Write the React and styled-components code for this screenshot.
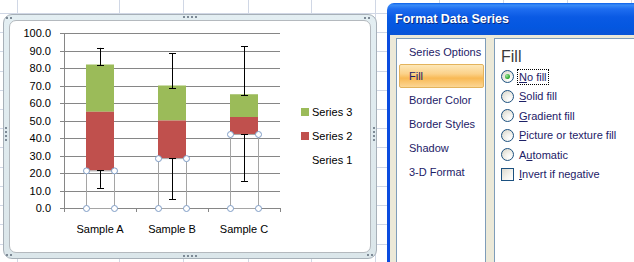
import React from "react";
import styled, { createGlobalStyle } from "styled-components";

const Global = createGlobalStyle`
  html, body { margin: 0; padding: 0; overflow: hidden; background: #fff; }
  * { box-sizing: border-box; }
`;

const rowLines = [13, 32, 51, 71, 90, 109, 128, 147, 167, 186, 205, 224, 244];
const colLines = [17, 119, 183, 248, 311, 375, 439, 503, 567, 631];
const gridBg = [
  ...rowLines.map(
    (y) => `linear-gradient(#d0d7e5, #d0d7e5) 0 ${y}px / 100% 1px no-repeat`
  ),
  ...colLines.map(
    (x) => `linear-gradient(#d0d7e5, #d0d7e5) ${x}px 0 / 1px 100% no-repeat`
  ),
].join(", ");

const Sheet = styled.div`
  position: relative;
  width: 634px;
  height: 262px;
  overflow: hidden;
  background: ${gridBg};
  background-color: #fff;
  font-family: "Liberation Sans", Arial, sans-serif;
`;

/* ---------- chart object ---------- */
const ChartFrame = styled.div`
  position: absolute;
  left: 3px;
  top: 14px;
  width: 374px;
  height: 245px;
  border: 1px solid #a7b0b8;
  border-radius: 9px;
  background: linear-gradient(#e3eef2, #dbe6ea);
  padding: 5px;
`;

const Handle = styled.span`
  position: absolute;
  display: flex;
  gap: 2px;
  flex-direction: ${(p) => (p.$vertical ? "column" : "row")};
  & > i {
    display: block;
    width: 2px;
    height: 2px;
    background: #7d8a96;
  }
`;

const ChartInner = styled.div`
  width: 100%;
  height: 100%;
  background: #fff;
  border: 1px solid #b4b9be;
  border-radius: 7px;
  display: flex;
  flex-direction: row;
`;

const Plot = styled.svg`
  display: block;
  flex: none;
  font-family: "Liberation Sans", Arial, sans-serif;
`;

const Legend = styled.div`
  display: flex;
  flex-direction: column;
  gap: 10px;
  padding: 84px 0 0 12px;
`;

const LegendItem = styled.div`
  display: flex;
  align-items: center;
  gap: 3px;
  height: 14px;
  font-size: 11px;
  color: #000;
  white-space: nowrap;
`;

const Swatch = styled.span`
  display: block;
  width: 8px;
  height: 8px;
  background: ${(p) => p.$color || "transparent"};
`;

/* ---------- dialog ---------- */
const Dialog = styled.div`
  position: absolute;
  left: 387px;
  top: 3px;
  width: 270px;
  height: 280px;
  display: flex;
  flex-direction: column;
`;

const TitleBar = styled.div`
  height: 32px;
  flex: none;
  border-radius: 7px 7px 0 0;
  background: linear-gradient(
    #0a5fe8 0px,
    #3a8cf7 2px,
    #1e6df0 6px,
    #0a5ae4 14px,
    #0457e0 24px,
    #0a54d6 32px
  );
  display: flex;
  align-items: center;
  padding: 0 0 1px 8px;
  color: #fff;
  font-weight: bold;
  font-size: 12.5px;
  text-shadow: 1px 1px 0 #0a2a80;
  letter-spacing: 0px;
`;

const DialogBody = styled.div`
  flex: 1;
  display: flex;
  gap: 8px;
  background: #ece9d8;
  border-left: 3px solid #0a4ce0;
  padding: 3px 0 0 6px;
`;

const Panel = styled.div`
  background: #fff;
  border: 1px solid #7f9db9;
  flex: ${(p) => (p.$grow ? 1 : "none")};
  width: ${(p) => (p.$width ? `${p.$width}px` : "auto")};
  font-size: 11px;
`;

const NavList = styled.div`
  display: flex;
  flex-direction: column;
  padding: 1px 1px 0 2px;
`;

const NavItem = styled.div`
  height: 24px;
  display: flex;
  align-items: center;
  padding-left: 9px;
  color: #1d2167;
  border: 1px solid ${(p) => (p.$active ? "#e3b35c" : "transparent")};
  border-radius: 2px;
  background: ${(p) =>
    p.$active
      ? "linear-gradient(#fde7b8 0%, #fbd189 40%, #f8b955 60%, #fcd694 100%)"
      : "transparent"};
`;

const FillContent = styled.div`
  padding: 8px 0 0 6px;
  display: flex;
  flex-direction: column;
`;

const Heading = styled.div`
  height: 20px;
  font-size: 16px;
  color: #3a3a3a;
  display: flex;
  align-items: center;
`;

const Option = styled.div`
  height: 19.5px;
  display: flex;
  align-items: center;
  gap: 5px;
  color: #1d2167;
  white-space: nowrap;
`;

const Radio = styled.span`
  position: relative;
  width: 13px;
  height: 13px;
  flex: none;
  border-radius: 50%;
  border: 1px solid #1c5180;
  background: radial-gradient(circle at 70% 75%, #fff 0%, #f4f3ee 35%, #d6d3c6 100%);
  &::after {
    content: "";
    display: ${(p) => (p.$checked ? "block" : "none")};
    position: absolute;
    left: 3px;
    top: 3px;
    width: 5px;
    height: 5px;
    border-radius: 50%;
    background: radial-gradient(circle at 35% 35%, #9fe59f, #21a121 70%);
  }
`;

const Check = styled.span`
  width: 13px;
  height: 13px;
  flex: none;
  border: 1px solid #1c5180;
  background: linear-gradient(135deg, #dcdad0 0%, #f5f4ef 60%, #fff 100%);
`;

const Label = styled.span`
  padding: 1px 1px;
  border: 1px dotted ${(p) => (p.$focus ? "#000" : "transparent")};
  margin-left: -2px;
  & u { text-decoration: underline; }
`;

/* ---------- data ---------- */
const cats = [
  { name: "Sample A", cx: 101, s1: 21.5, s2: 55, s3: 82, hi: 91.5, lo: 11.5, hiFrom: 81.5 },
  { name: "Sample B", cx: 173, s1: 28.5, s2: 50, s3: 70, hi: 88.5, lo: 5, hiFrom: 68.5 },
  { name: "Sample C", cx: 245, s1: 42.3, s2: 52, s3: 65, hi: 92.5, lo: 15.5, hiFrom: 64.5 },
];
const Y = (v) => 209 - v * 1.75;
const ticks = [0, 10, 20, 30, 40, 50, 60, 70, 80, 90, 100];

function Chart() {
  const bw = 28;
  return (
    <Plot width="279" height="229" viewBox="11 22 279 229">
      {ticks.map((t) => (
        <g key={t}>
          <line x1="61" x2="281" y1={Math.round(Y(t)) + 0.5} y2={Math.round(Y(t)) + 0.5} stroke="#868686" />
          <text x="52" y={Math.round(Y(t)) + 4} fontSize="11" textAnchor="end" fill="#000">
            {t.toFixed(1)}
          </text>
        </g>
      ))}
      <line x1="65.5" x2="65.5" y1="34" y2="210" stroke="#868686" />
      {[65, 137, 209, 281].map((x) => (
        <line key={x} x1={x + 0.5} x2={x + 0.5} y1="209" y2="213" stroke="#868686" />
      ))}
      {cats.map((c) => {
        const x = c.cx - bw / 2;
        return (
          <g key={c.name}>
            <rect x={x} y={Y(c.s3)} width={bw} height={Y(c.s2) - Y(c.s3)} fill="#9bbb59" />
            <rect x={x} y={Y(c.s2)} width={bw} height={Y(c.s1) - Y(c.s2)} fill="#c0504d" />
            <rect x={x + 0.5} y={Y(c.s1) + 0.5} width={bw} height={Y(0) - Y(c.s1)} fill="none" stroke="#a5a5a5" />
            {/* error bars */}
            <g stroke="#000" strokeWidth="1">
              <line x1={c.cx + 0.5} x2={c.cx + 0.5} y1={Y(c.hi)} y2={Y(c.hiFrom)} />
              <line x1={c.cx - 3} x2={c.cx + 4} y1={Math.round(Y(c.hi)) + 0.5} y2={Math.round(Y(c.hi)) + 0.5} />
              <line x1={c.cx - 3} x2={c.cx + 4} y1={Math.round(Y(c.hiFrom)) + 0.5} y2={Math.round(Y(c.hiFrom)) + 0.5} />
              <line x1={c.cx + 0.5} x2={c.cx + 0.5} y1={Y(c.s1)} y2={Y(c.lo)} />
              <line x1={c.cx - 3} x2={c.cx + 4} y1={Math.round(Y(c.s1)) + 0.5} y2={Math.round(Y(c.s1)) + 0.5} />
              <line x1={c.cx - 3} x2={c.cx + 4} y1={Math.round(Y(c.lo)) + 0.5} y2={Math.round(Y(c.lo)) + 0.5} />
            </g>
            {[
              [x + 0.5, Y(c.s1) + 0.5],
              [x + bw + 0.5, Y(c.s1) + 0.5],
              [x + 0.5, Y(0) + 0.5],
              [x + bw + 0.5, Y(0) + 0.5],
            ].map(([hx, hy], i) => (
              <circle key={i} cx={hx} cy={hy} r="3" fill="#fff" stroke="#7f9dc6" />
            ))}
            <text x={c.cx} y="234" fontSize="11" textAnchor="middle" fill="#000">
              {c.name}
            </text>
          </g>
        );
      })}
    </Plot>
  );
}

const dots = (n) => Array.from({ length: n }, (_, i) => <i key={i} />);

export default function App() {
  return (
    <>
      <Global />
      <Sheet>
        <ChartFrame>
          <Handle style={{ left: 2, top: 2 }}>{dots(2)}</Handle>
          <Handle style={{ left: 179, top: 1 }}>{dots(4)}</Handle>
          <Handle style={{ right: 6, top: 2 }}>{dots(2)}</Handle>
          <Handle $vertical style={{ left: 1, top: 112 }}>{dots(4)}</Handle>
          <Handle $vertical style={{ right: 1, top: 112 }}>{dots(4)}</Handle>
          <Handle style={{ left: 2, bottom: 2 }}>{dots(2)}</Handle>
          <Handle style={{ left: 179, bottom: 1 }}>{dots(4)}</Handle>
          <Handle style={{ right: 3, bottom: 2 }}>{dots(2)}</Handle>
          <ChartInner>
            <Chart />
            <Legend>
              <LegendItem><Swatch $color="#9bbb59" />Series 3</LegendItem>
              <LegendItem><Swatch $color="#c0504d" />Series 2</LegendItem>
              <LegendItem><Swatch />Series 1</LegendItem>
            </Legend>
          </ChartInner>
        </ChartFrame>

        <Dialog>
          <TitleBar>Format Data Series</TitleBar>
          <DialogBody>
            <Panel $width={90}>
              <NavList>
                <NavItem>Series Options</NavItem>
                <NavItem $active>Fill</NavItem>
                <NavItem>Border Color</NavItem>
                <NavItem>Border Styles</NavItem>
                <NavItem>Shadow</NavItem>
                <NavItem>3-D Format</NavItem>
              </NavList>
            </Panel>
            <Panel $grow>
              <FillContent>
                <Heading>Fill</Heading>
                <Option><Radio $checked /><Label $focus><u>N</u>o fill</Label></Option>
                <Option><Radio /><Label><u>S</u>olid fill</Label></Option>
                <Option><Radio /><Label><u>G</u>radient fill</Label></Option>
                <Option><Radio /><Label><u>P</u>icture or texture fill</Label></Option>
                <Option><Radio /><Label>A<u>u</u>tomatic</Label></Option>
                <Option><Check /><Label><u>I</u>nvert if negative</Label></Option>
              </FillContent>
            </Panel>
          </DialogBody>
        </Dialog>
      </Sheet>
    </>
  );
}
